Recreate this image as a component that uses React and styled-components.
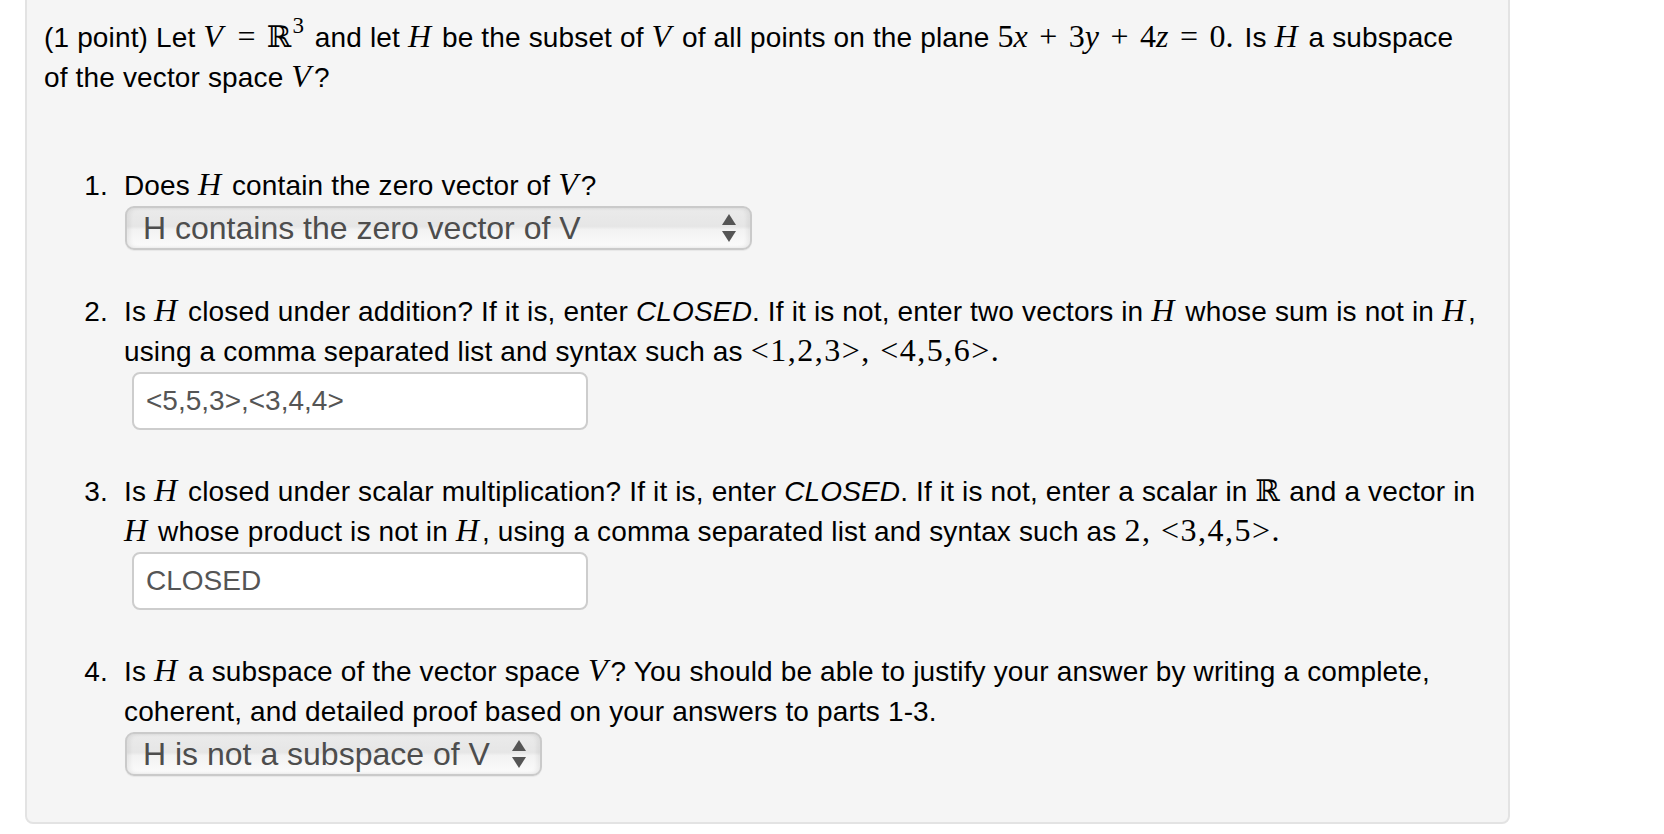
import React from "react";
import styled, { createGlobalStyle } from "styled-components";

const GlobalStyle = createGlobalStyle`
  html, body {
    margin: 0;
    padding: 0;
    background: #ffffff;
  }
  body {
    font-family: "Liberation Sans", Arial, Helvetica, sans-serif;
    color: #000;
    overflow: hidden;
  }
`;

const Page = styled.div`
  padding-left: 25px;
`;

const Well = styled.div`
  box-sizing: border-box;
  width: 1485px;
  margin-top: -20px;
  padding: 32px 17px 46px;
  background: #f5f5f5;
  border: 2px solid #e3e3e3;
  border-radius: 8px;
  font-size: 28px;
  line-height: 40px;
  letter-spacing: 0.15px;
`;

const Prompt = styled.p`
  margin: 0;
  padding-top: 4px;
  white-space: nowrap;
`;

const QuestionList = styled.ol`
  list-style: none;
  margin: 64px 0 0;
  padding: 0;
`;

const Item = styled.li`
  display: flex;
  margin-top: ${(p) => (p.$first ? 0 : 38)}px;
`;

const Marker = styled.div`
  box-sizing: border-box;
  flex: 0 0 80px;
  padding: 4px 16px 0 0;
  text-align: right;
`;

const Body = styled.div`
  flex: 1;
  display: flex;
  flex-direction: column;
  align-items: flex-start;
`;

const Question = styled.div`
  padding-top: 4px;
  white-space: nowrap;
`;

const M = styled.span`
  font-family: "Liberation Serif", "DejaVu Serif", "Times New Roman", serif;
  font-size: 32px;
  line-height: 1;
  font-style: ${(p) => (p.$up ? "normal" : "italic")};
  letter-spacing: ${(p) => (p.$up ? 1.5 : 0)}px;
  padding-right: ${(p) => (p.$up ? 0 : 3)}px;
`;

const Num = styled.span`
  font-style: normal;
`;

const Op = styled.span`
  font-style: normal;
  margin: 0 0.36em;
`;

const Bb = styled.span`
  font-family: "DejaVu Serif", "Liberation Serif", serif;
  font-style: normal;
  font-size: 0.92em;
`;

const Sup = styled.sup`
  font-style: normal;
  font-size: 0.72em;
  line-height: 0;
  vertical-align: baseline;
  position: relative;
  top: -0.62em;
  margin-left: 1px;
`;

const SelectBox = styled.div`
  box-sizing: border-box;
  width: ${(p) => p.$width}px;
  height: 44px;
  margin: 0 0 0 1px;
  padding: 0 14px 0 16px;
  display: flex;
  align-items: center;
  justify-content: space-between;
  border: 2px solid #cacaca;
  border-radius: 9px;
  background: linear-gradient(
    to bottom,
    #ebebeb 0%,
    #e6e6e6 46%,
    #f2f2f2 54%,
    #fbfbfb 100%
  );
  box-shadow: inset 3px 0 4px rgba(0, 0, 0, 0.06),
    inset -3px 0 4px rgba(0, 0, 0, 0.06), 0 1px 1px rgba(0, 0, 0, 0.06);
  font-size: 32px;
  line-height: 1;
  color: #4d4d4d;
  letter-spacing: 0;
  white-space: nowrap;
`;

const TextEntry = styled.input`
  box-sizing: border-box;
  width: 456px;
  height: 58px;
  margin: 0 0 0 8px;
  padding: 0 12px;
  border: 2px solid #cdcdcd;
  border-radius: 8px;
  background: #ffffff;
  font-family: "Liberation Sans", Arial, Helvetica, sans-serif;
  font-size: 28px;
  color: #555;
  outline: none;
`;

const Arrows = () => (
  <svg width="14" height="28" viewBox="0 0 14 28" aria-hidden="true">
    <polygon points="7,0 14,11 0,11" fill="#555" />
    <polygon points="0,17 14,17 7,28" fill="#555" />
  </svg>
);

const Select = ({ width, children }) => (
  <SelectBox $width={width}>
    <span>{children}</span>
    <Arrows />
  </SelectBox>
);

const App = () => (
  <>
    <GlobalStyle />
    <Page>
      <Well>
        <Prompt>
          (1 point) Let <M>V</M>
          <M>
            <Op>=</Op>
            <Bb>ℝ</Bb>
            <Sup>3</Sup>
          </M>{" "}
          and let <M>H</M> be the subset of <M>V</M> of all points on the plane{" "}
          <M>
            <Num>5</Num>x<Op>+</Op>
            <Num>3</Num>y<Op>+</Op>
            <Num>4</Num>z<Op>=</Op>
            <Num>0.</Num>
          </M>{" "}
          Is <M>H</M> a subspace
          <br />
          of the vector space <M>V</M>?
        </Prompt>

        <QuestionList>
          <Item $first>
            <Marker>1.</Marker>
            <Body>
              <Question>
                Does <M>H</M> contain the zero vector of <M>V</M>?
              </Question>
              <Select width={627}>H contains the zero vector of V</Select>
            </Body>
          </Item>

          <Item>
            <Marker>2.</Marker>
            <Body>
              <Question>
                Is <M>H</M> closed under addition? If it is, enter <i>CLOSED</i>. If it
                is not, enter two vectors in <M>H</M> whose sum is not in <M>H</M>,
                <br />
                using a comma separated list and syntax such as{" "}
                <M $up>&lt;1,2,3&gt;, &lt;4,5,6&gt;.</M>
              </Question>
              <TextEntry readOnly value="<5,5,3>,<3,4,4>" />
            </Body>
          </Item>

          <Item>
            <Marker>3.</Marker>
            <Body>
              <Question>
                Is <M>H</M> closed under scalar multiplication? If it is, enter{" "}
                <i>CLOSED</i>. If it is not, enter a scalar in{" "}
                <M $up>
                  <Bb>ℝ</Bb>
                </M>{" "}
                and a vector in
                <br />
                <M>H</M> whose product is not in <M>H</M>, using a comma separated list
                and syntax such as <M $up>2, &lt;3,4,5&gt;.</M>
              </Question>
              <TextEntry readOnly value="CLOSED" />
            </Body>
          </Item>

          <Item>
            <Marker>4.</Marker>
            <Body>
              <Question>
                Is <M>H</M> a subspace of the vector space <M>V</M>? You should be able
                to justify your answer by writing a complete,
                <br />
                coherent, and detailed proof based on your answers to parts 1-3.
              </Question>
              <Select width={417}>H is not a subspace of V</Select>
            </Body>
          </Item>
        </QuestionList>
      </Well>
    </Page>
  </>
);

export default App;
